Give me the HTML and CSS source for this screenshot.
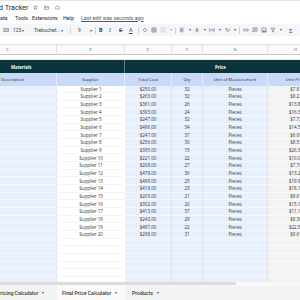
FILE: index.html
```html
<!DOCTYPE html>
<html>
<head>
<meta charset="utf-8">
<link rel="stylesheet" href="styles.css">
</head>
<body>
<div class="app">
  <div class="titlebar">
    <span class="title">d Tracker</span>
    <svg class="ticon" viewBox="0 0 10 10"><path d="M5 1l1.2 2.6 2.8.3-2.1 1.9.6 2.8L5 7.2 2.5 8.6l.6-2.8L1 3.9l2.8-.3z" fill="none" stroke="#444" stroke-width=".9"/></svg>
    <svg class="ticon" viewBox="0 0 10 10"><path d="M1 2.5h3l1 1h4v5H1z" fill="none" stroke="#444" stroke-width=".9"/><path d="M1 4.5h8" stroke="#444" stroke-width=".7"/></svg>
    <svg class="ticon" viewBox="0 0 10 10"><path d="M2.8 8h4.8a1.9 1.9 0 0 0 .2-3.8A2.8 2.8 0 0 0 2.5 4 2 2 0 0 0 2.8 8z" fill="none" stroke="#444" stroke-width=".9"/></svg>
  </div>
  <div class="menu">
    <span class="m1">ata</span>
    <span class="m2">Tools</span>
    <span class="m3">Extensions</span>
    <span class="m4">Help</span>
    <span class="lastedit">Last edit was seconds ago</span>
  </div>
  <div class="toolbar">
    <span class="tb t-dec">.00</span>
    <span class="tb t-123">123<i class="caret">▾</i></span>
    <span class="tb t-font">Trebuchet...<i class="caret">▾</i></span>
    <span class="sep"></span>
    <span class="tb t-size">9<i class="caret">▾</i></span>
    <span class="sep"></span>
    <span class="tb t-b">B</span>
    <span class="tb t-i">I</span>
    <span class="tb t-s">S</span>
    <span class="tb t-a">A</span>
    <span class="sep"></span>
    <svg class="icon" viewBox="0 0 10 10"><path d="M2 5l3-3 3 3-3 3z" fill="none" stroke="#444" stroke-width=".9"/><path d="M8.5 6.5c.5.8.5 1.5 0 1.5s-.5-.7 0-1.5z" fill="#444"/></svg>
    <svg class="icon" viewBox="0 0 10 10"><path d="M1.5 1.5h7v7h-7zM5 1.5v7M1.5 5h7" fill="none" stroke="#444" stroke-width=".8"/></svg>
    <svg class="icon faint" viewBox="0 0 10 10"><path d="M1.5 1.5h7v7h-7zM5 1.5v7" fill="none" stroke="#999" stroke-width=".8" stroke-dasharray="1 .8"/></svg>
    <i class="caret faint">▾</i>
    <span class="sep"></span>
    <svg class="icon" viewBox="0 0 10 10"><path d="M1.5 2h7M1.5 4h5M1.5 6h7M1.5 8h5" stroke="#444" stroke-width=".8"/></svg>
    <i class="caret">▾</i>
    <svg class="icon" viewBox="0 0 10 10"><path d="M5 1v3M3.5 2.5L5 4l1.5-1.5M1.5 5h7M5 9V6M3.5 7.5L5 6l1.5 1.5" fill="none" stroke="#444" stroke-width=".8"/></svg>
    <i class="caret">▾</i>
    <svg class="icon" viewBox="0 0 10 10"><path d="M1.5 1.5v7M8.5 1.5v7M3 5h4M5.5 3.8L7 5 5.5 6.2" fill="none" stroke="#444" stroke-width=".8"/></svg>
    <i class="caret">▾</i>
    <svg class="icon" viewBox="0 0 10 10"><path d="M2 3h4M4 3v4M5 8.5l4-4M7.5 4.5H9V6" fill="none" stroke="#444" stroke-width=".8"/></svg>
    <i class="caret">▾</i>
    <span class="sep"></span>
    <svg class="icon" viewBox="0 0 10 10"><path d="M4 3.2H2.8a1.8 1.8 0 0 0 0 3.6H4M6 3.2h1.2a1.8 1.8 0 0 1 0 3.6H6M3.5 5h3" fill="none" stroke="#444" stroke-width=".8"/></svg>
    <svg class="icon" viewBox="0 0 10 10"><path d="M1.5 1.5h7v5.5H3L1.5 8.5z" fill="none" stroke="#444" stroke-width=".8"/><path d="M5 2.8v3M3.5 4.3h3" stroke="#444" stroke-width=".7"/></svg>
    <svg class="icon" viewBox="0 0 10 10"><path d="M1.5 1.5h7v7h-7z" fill="none" stroke="#444" stroke-width=".8"/><path d="M2.5 7.5l2-2.5 1.5 1.5 1-1 1 2z" fill="#444"/></svg>
    <svg class="icon" viewBox="0 0 10 10"><path d="M1.5 2h7L6 5v3.5L4 7.5V5z" fill="none" stroke="#444" stroke-width=".8"/></svg>
    <i class="caret">▾</i>
    <span class="tb t-sig">Σ</span>
  </div>
  <div class="formula"></div>
  <div class="sheet" id="sheet">
    <div class="ch c-c">C</div>
    <div class="ch">D</div>
    <div class="ch">E</div>
    <div class="ch">F</div>
    <div class="ch">G</div>
    <div class="ch">H</div>
    <div class="gaprow"></div>
    <div class="band band-mat">Materials</div>
    <div class="band band-price">Price</div>
    <div class="sub sub-desc">Description</div>
    <div class="sub">Supplier</div>
    <div class="sub">Total Cost</div>
    <div class="sub">Qty</div>
    <div class="sub">Unit of Measurement</div>
    <div class="sub">Unit Price</div>
  </div>
  <div class="tabs">
    <div class="scroll"><div class="thumb"></div></div>
    <div class="tabrow">
      <span class="tab tab-first">Pricing Calculator<i class="tcaret">▾</i></span>
      <span class="tab tab-active">Final Price Calculator<i class="tcaret">▾</i></span>
      <span class="tab">Products<i class="tcaret">▾</i></span>
    </div>
  </div>
</div>
<script src="app.js"></script>
</body>
</html>
```

FILE: styles.css
```css
* { box-sizing: border-box; }
body { margin: 0; font-family: Roboto, "Liberation Sans", sans-serif; color: #202124; }
.app { width: 300px; height: 300px; overflow: hidden; background: #fff; display: flex; flex-direction: column; border-top: 1px solid #e3e3e3; }

.titlebar { height: 12px; display: flex; align-items: center; padding-left: 0; }
.title { font-size: 7.2px; color: #1f1f1f; width: 34px; margin-left: -1px; white-space: nowrap; }
.ticon { width: 5px; height: 5px; margin-right: 6px; }

.menu { height: 9px; display: flex; align-items: center; font-size: 5.3px; color: #1f1f1f; white-space: nowrap; }
.menu span { display: inline-block; }
.m1 { width: 15px; }
.m2 { width: 17px; }
.m3 { width: 31px; }
.m4 { width: 18px; }
.lastedit { color: #555; text-decoration: underline; }

.toolbar { height: 12px; margin-top: 2px; display: flex; align-items: center; font-size: 5px; color: #444; white-space: nowrap; background: #f3f6fb; padding-left: 2px; gap: 3px; }
.tb { display: inline-block; }
.t-dec { width: 8px; }
.t-123 { width: 18px; }
.t-font { width: 33px; }
.t-size { width: 18px; padding-left: 4px; }
.t-size .caret { margin-left: 9px; }
.t-b { font-weight: bold; width: 7px; font-size: 5.5px; }
.t-i { font-style: italic; width: 7px; font-family: "Liberation Serif", serif; font-size: 5.5px; }
.t-s { text-decoration: line-through; width: 7px; font-size: 5.5px; }
.t-a { text-decoration: underline; width: 6px; font-size: 5.5px; }
.t-sig { font-size: 6px; margin-left: 4px; }
.caret { font-style: normal; font-size: 3.5px; margin-left: 1px; color: #555; }
.faint { color: #aaa; }
.sep { width: 1px; height: 7px; background: #d6d6d6; }
.icon { width: 6px; height: 6px; }

.formula { height: 8px; flex: none; }

.sheet { height: 237.5px; flex: none; overflow: hidden; display: grid; grid-template-columns: 57px 68px 47px 31px 65px 56px; grid-template-rows: 11px 5px 13px 12.5px; grid-auto-rows: 7.67px; font-family: "Open Sans", "Liberation Sans", sans-serif; }
.ch { background: #f8f9fa; border-right: 1px solid #e1e1e1; border-bottom: 1px solid #c7c7c7; border-top: 1px solid #e1e1e1; font-size: 4.2px; color: #5f6368; display: flex; align-items: center; justify-content: center; }
.c-c { justify-content: flex-start; padding-left: 6px; }
.gaprow { grid-column: 1 / -1; border-bottom: 1px solid #e6e6e6; }
.band { background: #0c343d; color: #fff; font-weight: bold; font-size: 4.3px; display: flex; align-items: center; }
.band-mat { grid-column: 1 / 3; padding-left: 11px; border-right: 1px solid #5c7e86; }
.band-price { grid-column: 3 / 7; padding-left: 90px; }
.sub { background: #c9daf8; font-size: 4.3px; color: #2b2b2b; display: flex; align-items: center; justify-content: center; border-right: 1px solid #e6eefc; white-space: nowrap; }
.sub-desc { justify-content: flex-start; padding-left: 1px; }

.cell { font-size: 4.5px; color: #333; display: flex; align-items: center; justify-content: center; white-space: nowrap; border-bottom: 1px solid #f4f7fd; }
.cell-desc { background: #e8f0fe; border-right: 1px solid #dfe7f5; }
.cell-sup { background: #fff; border-bottom: 1px solid #f4f4f4; }
.cell-blue { background: #e8f0fe; border-right: 1px solid #d9e3f4; }
.cell-price { background: #f3f3f3; border-bottom: 1px solid #f9f9f9; }

.tabs { flex: 1; background: #f1f3f4; display: flex; flex-direction: column; }
.scroll { height: 4px; background: #f8f8f8; }
.thumb { width: 236px; height: 3px; background: #dadce0; margin-top: 0.5px; border-radius: 1px; }
.tabrow { flex: 1; display: flex; align-items: stretch; font-size: 5.2px; color: #333; font-weight: 500; }
.tab { display: flex; align-items: center; padding: 0 4px; white-space: nowrap; }
.tab-first { margin-left: -3px; width: 60px; padding-left: 0; }
.tab-active { background: #fafafa; width: 68px; padding-left: 5px; }
.tab + .tab:not(.tab-active) { padding-left: 7px; }
.tcaret { font-style: normal; font-size: 3.5px; margin-left: 4px; color: #555; }
```

FILE: app.js
```js
var cost = [250,263,361,393,247,496,247,256,395,221,208,478,499,418,203,302,413,243,497,298];
var qty = [32,32,26,24,32,34,37,30,15,22,27,36,25,23,21,20,37,29,22,31];
var sheet = document.getElementById('sheet');
function cell(cls, text) {
  var d = document.createElement('div');
  d.className = 'cell ' + cls;
  d.textContent = text;
  sheet.appendChild(d);
}
for (var i = 0; i < 27; i++) {
  var has = i < cost.length;
  cell('cell-desc', '');
  cell('cell-sup', has ? 'Supplier ' + (i + 1) : '');
  cell('cell-blue', has ? '$' + cost[i].toFixed(2) : '');
  cell('cell-blue', has ? String(qty[i]) : '');
  cell('cell-blue', has ? 'Pieces' : '');
  cell('cell-price', has ? '$' + (cost[i] / qty[i]).toFixed(2) : '');
}
```
